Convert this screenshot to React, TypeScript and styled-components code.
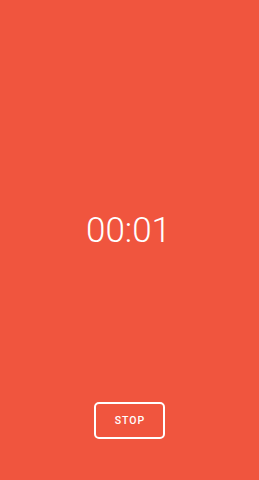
import React from "react";
import styled, { createGlobalStyle } from "styled-components";

const Global = createGlobalStyle`
  html, body { margin: 0; padding: 0; height: 100%; }
  body { background: #f0553e; font-family: Roboto, "Noto Sans", sans-serif; }
  #root { height: 100%; }
`;

const Screen = styled.div`
  height: 100vh;
  background: #f0553e;
  display: flex;
  flex-direction: column;
  align-items: center;
`;

const Center = styled.div`
  flex: 1;
  display: flex;
  align-items: center;
  justify-content: center;
  padding-top: 58px;
`;

const Time = styled.div`
  color: #ffffff;
  font-size: 35px;
  font-weight: 300;
  margin-left: -2px;
`;

const Footer = styled.div`
  padding-bottom: 41px;
`;

const StopButton = styled.button`
  width: 71px;
  height: 37px;
  border: 2px solid #ffffff;
  border-radius: 5px;
  background: transparent;
  color: #ffffff;
  font-family: Roboto, sans-serif;
  font-size: 10.5px;
  font-weight: 500;
  letter-spacing: 1px;
  padding: 0 0 0 1px;
  box-sizing: border-box;
`;

export default function App() {
  return (
    <>
      <Global />
      <Screen>
        <Center>
          <Time>00:01</Time>
        </Center>
        <Footer>
          <StopButton>STOP</StopButton>
        </Footer>
      </Screen>
    </>
  );
}
